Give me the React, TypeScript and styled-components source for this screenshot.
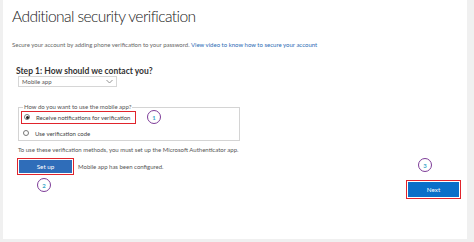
import styled, { createGlobalStyle } from "styled-components";

const Global = createGlobalStyle`
	html, body {
		margin: 0;
		padding: 0;
		background: #f0f0f0;
	}
	body {
		font-family: Lato, "Open Sans", Arial, sans-serif;
		color: #444;
	}
`;

/* white page card */
const Card = styled.main`
	box-sizing: border-box;
	width: 464px;
	height: 239px;
	margin-left: 3px;
	background: #fff;
	padding: 4px 6px 0 9px;
	display: flex;
	flex-direction: column;
`;

const Title = styled.h1`
	margin: 0;
	font-size: 15.6px;
	font-weight: 300;
	line-height: 24px;
	letter-spacing: -0.6px;
	color: #222;
`;

const Intro = styled.p`
	margin: 13px 0 0;
	font-size: 6px;
	line-height: 8px;
	color: #666;
	& > a {
		color: #2b6cb5;
		text-decoration: none;
	}
`;

const Step = styled.h2`
	margin: 17px 0 0 4px;
	font-size: 8.5px;
	font-weight: 700;
	line-height: 10px;
	color: #333;
`;

/* dropdown */
const Select = styled.div`
	box-sizing: border-box;
	margin: 0 0 0 6px;
	width: 99px;
	height: 11px;
	border: 1px solid #d6d6d6;
	display: flex;
	align-items: center;
	justify-content: space-between;
	padding: 0 3px;
	font-size: 6px;
	color: #555;
`;

const Fieldset = styled.fieldset`
	box-sizing: border-box;
	margin: 17px 0 0 6px;
	width: 222px;
	height: 37px;
	padding: 0 0 0 2px;
	border: 1px solid #d4d4d4;
	display: flex;
	flex-direction: column;
	& > legend {
		font-size: 6px;
		line-height: 6px;
		color: #555;
		padding: 0 1px;
		margin-left: 2px;
	}
`;

const Row = styled.div`
	display: flex;
	align-items: center;
`;

/* red outline used by the annotations */
const Highlight = styled.div<{ $pad?: number }>`
	border: 1.6px solid #e0242c;
	padding: ${(p) => p.$pad ?? 0}px;
	display: flex;
	align-items: center;
`;

const Option = styled.label<{ $w?: number }>`
	box-sizing: border-box;
	display: flex;
	align-items: center;
	gap: 6px;
	height: ${(p) => (p.$w ? 11 : 18)}px;
	width: ${(p) => (p.$w ? p.$w + "px" : "auto")};
	padding-left: 2px;
	font-size: 6px;
	color: #444;
`;

const Radio = styled.span<{ $on?: boolean }>`
	box-sizing: border-box;
	width: 6px;
	height: 6px;
	border-radius: 50%;
	border: 1px solid #777;
	display: grid;
	place-items: center;
	&::after {
		content: "";
		width: 3px;
		height: 3px;
		border-radius: 50%;
		background: ${(p) => (p.$on ? "#222" : "transparent")};
	}
`;

/* numbered purple circle */
const Badge = styled.span`
	box-sizing: border-box;
	width: 14px;
	height: 14px;
	border-radius: 50%;
	border: 1.2px solid #7d3c98;
	display: grid;
	place-items: center;
	font-size: 6px;
	font-weight: 700;
	color: #37a6c9;
`;

const Note = styled.p`
	margin: 5px 0 0 6px;
	font-size: 6px;
	line-height: 8px;
	color: #555;
`;

const Bottom = styled.div`
	display: flex;
	justify-content: space-between;
	margin-top: 4px;
`;

const LeftCol = styled.div`
	display: flex;
	flex-direction: column;
	margin-left: 5px;
`;

const RightCol = styled.div`
	display: flex;
	flex-direction: column;
	align-items: flex-end;
`;

const Button = styled.button<{ $w: number; $h: number }>`
	width: ${(p) => p.$w}px;
	height: ${(p) => p.$h}px;
	border: none;
	padding: 0;
	background: ${(p) => (p.$h > 14 ? "#0a6fc9" : "#2f6db9")};
	color: #fff;
	font-family: inherit;
	font-size: 6.3px;
	cursor: pointer;
`;

const Status = styled.span`
	margin-left: 4px;
	font-size: 6px;
	color: #555;
`;

export default function App() {
	return (
		<>
			<Global />
			<Card>
				<Title>Additional security verification</Title>
				<Intro>
					Secure your account by adding phone verification to your password.{" "}
					<a href="#">View video to know how to secure your account</a>
				</Intro>
				<Step>Step 1: How should we contact you?</Step>
				<Select>
					<span>Mobile app</span>
					<svg width="7" height="5" viewBox="0 0 7 5">
						<path d="M0.5 1 L3.5 4 L6.5 1" fill="none" stroke="#888" strokeWidth="0.9" />
					</svg>
				</Select>
				<Fieldset>
					<legend>How do you want to use the mobile app?</legend>
					<Row>
						<Highlight>
							<Option $w={113}>
								<Radio $on />
								Receive notifications for verification
							</Option>
						</Highlight>
						<Badge style={{ marginLeft: 11 }}>1</Badge>
					</Row>
					<Option>
						<Radio />
						Use verification code
					</Option>
				</Fieldset>
				<Note>
					To use these verification methods, you must set up the Microsoft Authenticator app.
				</Note>
				<Bottom>
					<LeftCol>
						<Row>
							<Highlight $pad={1}>
								<Button $w={53} $h={13}>Set up</Button>
							</Highlight>
							<Status>Mobile app has been configured.</Status>
						</Row>
						<Badge style={{ marginLeft: 20, marginTop: 3 }}>2</Badge>
					</LeftCol>
					<RightCol>
						<Badge style={{ marginRight: 29 }}>3</Badge>
						<Highlight $pad={1} style={{ marginTop: 8 }}>
							<Button $w={51} $h={15}>Next</Button>
						</Highlight>
					</RightCol>
				</Bottom>
			</Card>
		</>
	);
}
